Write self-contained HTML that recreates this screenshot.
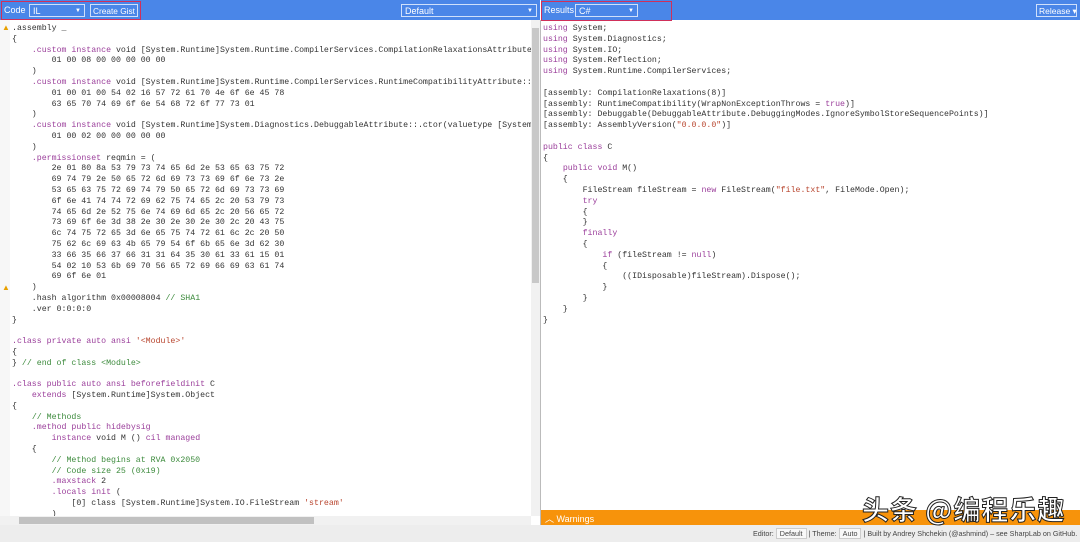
<!DOCTYPE html>
<html><head><meta charset="utf-8"><style>
*{margin:0;padding:0;box-sizing:border-box}
body{width:1080px;height:542px;overflow:hidden;background:#fff;font-family:"Liberation Sans",sans-serif;position:relative}
.bar{position:absolute;top:0;height:20px;background:#4a86e8}
.lbl{position:absolute;color:#fff;font-size:9px;top:5px}
.sel{position:absolute;top:4px;height:13px;border:1px solid #cfe0fb;color:#fff;font-size:9px;padding:1px 3px;line-height:10px;white-space:nowrap;overflow:hidden}
.sel .ar{position:absolute;right:3px;top:1px;font-size:6px}
.red{position:absolute;border:1px solid #d0305a}
pre{position:absolute;font-family:"Liberation Mono",monospace;font-size:8.25px;line-height:10.8px;color:#333;overflow:hidden}
.k{color:#9b3f9b}.c{color:#3d8b3d}.s{color:#b8452e}
</style></head><body>
<div class="bar" style="left:0;width:540px"></div>
<div class="bar" style="left:541px;width:539px"></div>
<div class="lbl" style="left:4px">Code</div>
<div class="sel" style="left:29px;width:56px">IL<span class="ar">▼</span></div>
<div class="sel" style="left:90px;width:48px;padding:1px 2px;font-size:8.3px">Create Gist</div>
<div class="red" style="left:1px;top:1px;width:140px;height:19px"></div>
<div class="sel" style="left:401px;width:136px">Default<span class="ar">▼</span></div>
<div class="lbl" style="left:544px">Results</div>
<div class="sel" style="left:575px;width:63px">C#<span class="ar">▼</span></div>
<div class="red" style="left:541px;top:1px;width:131px;height:20px"></div>
<div class="sel" style="left:1036px;width:41px;padding:1px 2px;font-size:8.5px">Release ▾</div>
<div style="position:absolute;left:540px;top:20px;width:1px;height:505px;background:#bbb"></div>
<div style="position:absolute;left:531px;top:20px;width:9px;height:496px;background:#f1f1f1"></div>
<div style="position:absolute;left:532px;top:28px;width:7px;height:255px;background:#c8c8c8"></div>
<div style="position:absolute;left:0;top:20px;width:10px;height:505px;background:#f7f7f7"></div>
<div style="position:absolute;left:2px;top:23px;color:#e8a000;font-size:8px">▲</div>
<div style="position:absolute;left:2px;top:283px;color:#e8a000;font-size:8px">▲</div>
<pre style="left:12px;top:24px;width:519px;height:492px">.assembly _
{
    <span class="k">.custom instance</span> void [System.Runtime]System.Runtime.CompilerServices.CompilationRelaxationsAttribute::.ctor(int32) = (
        01 00 08 00 00 00 00 00
    )
    <span class="k">.custom instance</span> void [System.Runtime]System.Runtime.CompilerServices.RuntimeCompatibilityAttribute::.ctor() = (
        01 00 01 00 54 02 16 57 72 61 70 4e 6f 6e 45 78
        63 65 70 74 69 6f 6e 54 68 72 6f 77 73 01
    )
    <span class="k">.custom instance</span> void [System.Runtime]System.Diagnostics.DebuggableAttribute::.ctor(valuetype [System.Runtime]
        01 00 02 00 00 00 00 00
    )
    <span class="k">.permissionset</span> reqmin = (
        2e 01 80 8a 53 79 73 74 65 6d 2e 53 65 63 75 72
        69 74 79 2e 50 65 72 6d 69 73 73 69 6f 6e 73 2e
        53 65 63 75 72 69 74 79 50 65 72 6d 69 73 73 69
        6f 6e 41 74 74 72 69 62 75 74 65 2c 20 53 79 73
        74 65 6d 2e 52 75 6e 74 69 6d 65 2c 20 56 65 72
        73 69 6f 6e 3d 38 2e 30 2e 30 2e 30 2c 20 43 75
        6c 74 75 72 65 3d 6e 65 75 74 72 61 6c 2c 20 50
        75 62 6c 69 63 4b 65 79 54 6f 6b 65 6e 3d 62 30
        33 66 35 66 37 66 31 31 64 35 30 61 33 61 15 01
        54 02 10 53 6b 69 70 56 65 72 69 66 69 63 61 74
        69 6f 6e 01
    )
    .hash algorithm 0x00008004 <span class="c">// SHA1</span>
    .ver 0:0:0:0
}

<span class="k">.class private auto ansi</span> <span class="s">'&lt;Module&gt;'</span>
{
} <span class="c">// end of class &lt;Module&gt;</span>

<span class="k">.class public auto ansi beforefieldinit</span> C
    <span class="k">extends</span> [System.Runtime]System.Object
{
    <span class="c">// Methods</span>
    <span class="k">.method public hidebysig</span>
        <span class="k">instance</span> void M () <span class="k">cil managed</span>
    {
        <span class="c">// Method begins at RVA 0x2050</span>
        <span class="c">// Code size 25 (0x19)</span>
        <span class="k">.maxstack</span> 2
        <span class="k">.locals init</span> (
            [0] class [System.Runtime]System.IO.FileStream <span class="s">'stream'</span>
        )</pre>
<div style="position:absolute;left:0;top:525px;width:1080px;height:17px;background:#ededed"></div>
<div style="position:absolute;left:0;top:516px;width:531px;height:9px;background:#f1f1f1;z-index:1"></div>
<div style="position:absolute;left:19px;top:517px;width:295px;height:7px;background:#c1c1c1;z-index:2"></div>
<pre style="left:543px;top:24px;width:537px;height:480px"><span class="k">using</span> System;
<span class="k">using</span> System.Diagnostics;
<span class="k">using</span> System.IO;
<span class="k">using</span> System.Reflection;
<span class="k">using</span> System.Runtime.CompilerServices;

[assembly: CompilationRelaxations(8)]
[assembly: RuntimeCompatibility(WrapNonExceptionThrows = <span class="k">true</span>)]
[assembly: Debuggable(DebuggableAttribute.DebuggingModes.IgnoreSymbolStoreSequencePoints)]
[assembly: AssemblyVersion(<span class="s">"0.0.0.0"</span>)]

<span class="k">public class</span> C
{
    <span class="k">public void</span> M()
    {
        FileStream fileStream = <span class="k">new</span> FileStream(<span class="s">"file.txt"</span>, FileMode.Open);
        <span class="k">try</span>
        {
        }
        <span class="k">finally</span>
        {
            <span class="k">if</span> (fileStream != <span class="k">null</span>)
            {
                ((IDisposable)fileStream).Dispose();
            }
        }
    }
}</pre>
<div style="position:absolute;left:541px;top:510px;width:539px;height:15px;background:#f7930b"></div>
<div style="position:absolute;left:545px;top:512px;color:#fff;font-size:9px">︿ Warnings</div>
<div style="position:absolute;left:862px;top:493px;font-family:'Noto Sans CJK SC',sans-serif;font-size:27px;font-weight:bold;color:#fff;-webkit-text-stroke:1px #222;letter-spacing:1px;line-height:32px;white-space:nowrap">头条 @编程乐趣</div>
<div style="position:absolute;left:753px;top:529px;font-size:7.2px;color:#444;white-space:nowrap">Editor: <span style="border:1px solid #ccc;background:#f8f8f8;padding:0 3px">Default</span> | Theme: <span style="border:1px solid #ccc;background:#f8f8f8;padding:0 3px">Auto</span> | Built by Andrey Shchekin (@ashmind) – see SharpLab on GitHub.</div>
</body></html>
